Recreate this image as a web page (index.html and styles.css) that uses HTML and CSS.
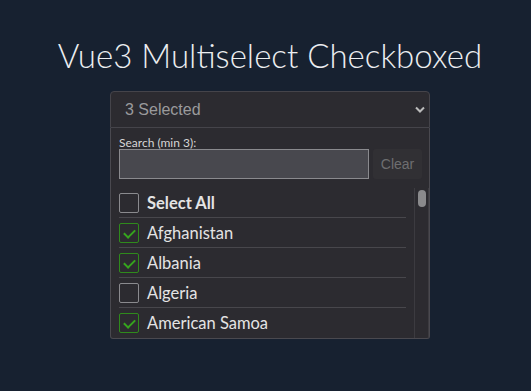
FILE: index.html
```html
<!DOCTYPE html>
<html lang="en">
<head>
    <meta charset="UTF-8">
    <title>Vue3 Multiselect Checkboxed</title>
    <link rel="stylesheet" href="styles.css">
</head>
<body>
    <div class="app">
        <h1>Vue3 Multiselect Checkboxed</h1>

        <div class="multiselect">
            <div class="select-box">
                <span class="select-text">3 Selected</span>
                <svg class="chevron" width="10" height="7" viewBox="0 0 10 7">
                    <path d="M1 1.5 L5 5.5 L9 1.5" fill="none" stroke="#bbb" stroke-width="2"/>
                </svg>
            </div>

            <div class="dropdown">
                <label class="search-label">Search (min 3):</label>
                <div class="search-row">
                    <input type="text" class="search-input">
                    <button class="clear-btn">Clear</button>
                </div>

                <div class="list-wrap">
                    <ul class="options">
                        <li class="option select-all"><span class="box"></span>Select All</li>
                        <li class="option"><span class="box checked"></span>Afghanistan</li>
                        <li class="option"><span class="box checked"></span>Albania</li>
                        <li class="option"><span class="box"></span>Algeria</li>
                        <li class="option"><span class="box checked"></span>American Samoa</li>
                    </ul>
                    <div class="scrollbar"><div class="thumb"></div></div>
                </div>
            </div>
        </div>
    </div>
</body>
</html>
```

FILE: styles.css
```css
* {
    margin: 0;
    padding: 0;
    box-sizing: border-box;
}

body {
    font-family: Lato, "Open Sans", sans-serif;
    background-color: #172130;
    height: 100vh;
    overflow: hidden;
}

.app {
    display: flex;
    flex-direction: column;
    align-items: center;
    padding: 35px 0 0 9px;
}

h1 {
    font-weight: 300;
    font-size: 33px;
    line-height: 40px;
    color: #eceef0;
    margin-bottom: 16px;
}

.multiselect {
    width: 320px;
}

.select-box {
    height: 37px;
    background-color: #2c2b30;
    border: 1px solid #45444a;
    border-radius: 4px 4px 0 0;
    display: flex;
    align-items: center;
    justify-content: space-between;
    padding: 0 4px 0 14px;
}

.select-text {
    font-family: "Liberation Sans", Arial, sans-serif;
    font-size: 16px;
    color: #9a9a9c;
}

.dropdown {
    background-color: #2c2b30;
    border: 1px solid #4a494f;
    border-top: none;
    border-radius: 0 0 3px 3px;
    padding: 8px 0 0 8px;
    height: 211px;
}

.search-label {
    display: block;
    font-size: 12px;
    line-height: 13px;
    color: #d6d6d6;
}

.search-row {
    display: flex;
    gap: 4px;
}

.search-input {
    width: 250px;
    height: 30px;
    background-color: #48484e;
    border: 1px solid #8a8a8e;
    outline: none;
}

.clear-btn {
    width: 49px;
    height: 30px;
    background-color: #313034;
    border: none;
    border-radius: 3px;
    color: #6e6e70;
    font-family: "Liberation Sans", Arial, sans-serif;
    font-size: 14px;
}

.list-wrap {
    display: flex;
    margin-top: 9px;
    height: 150px;
}

.options {
    list-style: none;
    width: 287px;
}

.option {
    display: flex;
    align-items: center;
    height: 30px;
    border-bottom: 1px solid #48474c;
    font-size: 16.5px;
    color: #e4e4e4;
}

.option:last-child {
    border-bottom: none;
}

.select-all {
    font-weight: 700;
}

.box {
    width: 20px;
    height: 20px;
    border: 1px solid #8a8a8e;
    border-radius: 2px;
    margin-right: 8px;
    position: relative;
}

.box.checked {
    border-color: #2f8a1c;
}

.box.checked::after {
    content: "";
    position: absolute;
    left: 6px;
    top: 3px;
    width: 5px;
    height: 9px;
    border: solid #36a51e;
    border-width: 0 2.5px 2.5px 0;
    transform: rotate(45deg);
}

.scrollbar {
    margin-left: 8px;
    width: 15px;
    border-left: 1px solid #3c3b40;
    border-right: 1px solid #3c3b40;
    padding: 2px 0 0 3px;
}

.thumb {
    width: 8px;
    height: 17px;
    background-color: #8a8a8c;
    border-radius: 4px;
}
```
